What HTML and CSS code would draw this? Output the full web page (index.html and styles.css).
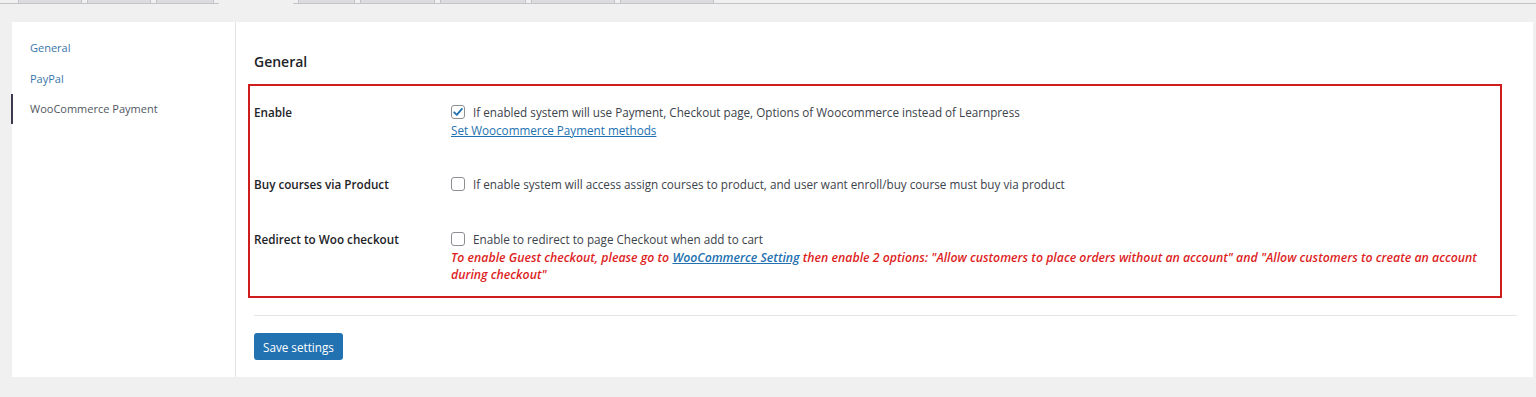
FILE: index.html
```html
<!DOCTYPE html>
<html lang="en">
<head>
<meta charset="utf-8">
<title>LearnPress Payments Settings</title>
<link rel="stylesheet" href="styles.css">
</head>
<body>
<div class="tabs">
  <span class="tab w64"></span>
  <span class="tab w64"></span>
  <span class="tab w58"></span>
  <span class="tab active w74"></span>
  <span class="tab w57"></span>
  <span class="tab w75"></span>
  <span class="tab w86"></span>
  <span class="tab w84"></span>
  <span class="tab w94"></span>
</div>
<div class="panel">
  <nav class="side">
    <a class="side-item">General</a>
    <a class="side-item">PayPal</a>
    <a class="side-item current">WooCommerce Payment</a>
  </nav>
  <main class="content">
    <h2 class="title">General</h2>
    <div class="highlight">
      <div class="row first">
        <div class="label">Enable</div>
        <div class="field">
          <label class="opt"><span class="cb checked"><svg viewBox="0 0 14 14" width="14" height="14"><path d="M3.2 7.3 L5.8 9.9 L10.9 3.9" fill="none" stroke="#2271b1" stroke-width="1.8" stroke-linecap="round" stroke-linejoin="round"/></svg></span>If enabled system will use Payment, Checkout page, Options of Woocommerce instead of Learnpress</label>
          <a class="link" href="#">Set Woocommerce Payment methods</a>
        </div>
      </div>
      <div class="row second">
        <div class="label">Buy courses via Product</div>
        <div class="field">
          <label class="opt"><span class="cb"></span>If enable system will access assign courses to product, and user want enroll/buy course must buy via product</label>
        </div>
      </div>
      <div class="row last">
        <div class="label">Redirect to Woo checkout</div>
        <div class="field">
          <label class="opt"><span class="cb"></span>Enable to redirect to page Checkout when add to cart</label>
          <p class="warn">To enable Guest checkout, please go to <a class="link" href="#">WooCommerce Setting</a> then enable 2 options: "Allow customers to place orders without an account" and "Allow customers to create an account during checkout"</p>
        </div>
      </div>
    </div>
    <hr class="sep">
    <button class="save" type="button">Save settings</button>
  </main>
</div>
</body>
</html>
```

FILE: styles.css
```css
* { box-sizing: border-box; }
html, body { margin: 0; padding: 0; }
body {
  background: #f0f0f1;
  font-family: "Open Sans", "Noto Sans", sans-serif;
  font-size: 11.7px;
  color: #3c434a;
  width: 1536px;
  height: 397px;
  overflow: hidden;
}
.tabs {
  display: flex;
  gap: 5px;
  padding-left: 18px;
  border-bottom: 1px solid #c3c4c7;
  box-sizing: content-box;
  height: 3px;
}
.tab {
  display: block;
  height: 4px;
  background: #dcdcde;
  border: 1px solid #c3c4c7;
  border-top: 0;
}
.tab.active {
  background: #f0f0f1;
  border-color: transparent;
  height: 5px;
}
.w64 { width: 64px; }
.w58 { width: 58px; }
.w74 { width: 74px; }
.w57 { width: 57px; }
.w75 { width: 75px; }
.w86 { width: 86px; }
.w84 { width: 84px; }
.w94 { width: 94px; }

.panel {
  display: flex;
  margin: 18px 3px 0 12px;
  background: #fff;
  height: 355px;
}
.side {
  width: 224px;
  flex: none;
  border-right: 1px solid #e4e4e6;
  padding-top: 11px;
  display: flex;
  flex-direction: column;
}
.side-item {
  height: 30px;
  line-height: 30px;
  padding-left: 17px;
  color: #3a76a8;
  font-size: 11px;
  border-left: 2px solid transparent;
  margin-left: -1px;
}
.side-item + .side-item { margin-top: 1px; }
.side-item.current {
  margin-top: 0;
  color: #50575e;
  border-left-color: #3c3a4f;
}
.content {
  flex: 1;
  padding: 0 16px 0 12px;
}
.title {
  margin: 0 0 12px 6px;
  padding-top: 30px;
  font-size: 14px;
  line-height: 20px;
  font-weight: 600;
  color: #1d2327;
}
.highlight {
  border: 2px solid #cf1d1d;
  margin-right: 15px;
  padding: 0 4px 13px 4px;
}
.row {
  display: flex;
  padding-top: 17px;
  padding-bottom: 19px;
}
.row.second { padding-top: 17px; padding-bottom: 20px; }
.row.last { padding-top: 17px; padding-bottom: 0; }
.label {
  width: 197px;
  flex: none;
  font-weight: 600;
  color: #1d2327;
  line-height: 18px;
}
.field { flex: 1; line-height: 18px; }
.opt {
  display: flex;
  align-items: center;
  gap: 8px;
  line-height: 18px;
}
.cb {
  width: 14px;
  height: 14px;
  flex: none;
  border: 1px solid #8c8f94;
  border-radius: 3px;
  display: inline-flex;
  align-items: center;
  justify-content: center;
  background: #fff;
}
.cb svg { display: block; margin: -1px; }
.link {
  color: #2271b1;
  text-decoration: underline;
}
.warn {
  margin: 1px 0 0;
  color: #dd1f1f;
  font-style: italic;
  font-weight: 600;
  font-size: 12.3px;
  line-height: 17px;
  padding-right: 10px;
}
.sep {
  border: 0;
  border-top: 1px solid #e4e4e6;
  margin: 17px 0 0 6px;
  height: 0;
}
.save {
  margin: 17px 0 0 6px;
  height: 27px;
  padding: 0 9px;
  background: #2271b1;
  color: #fff;
  border: 0;
  border-radius: 3px;
  font-family: "Open Sans", "Noto Sans", sans-serif;
  font-size: 11.7px;
  cursor: pointer;
}
```
